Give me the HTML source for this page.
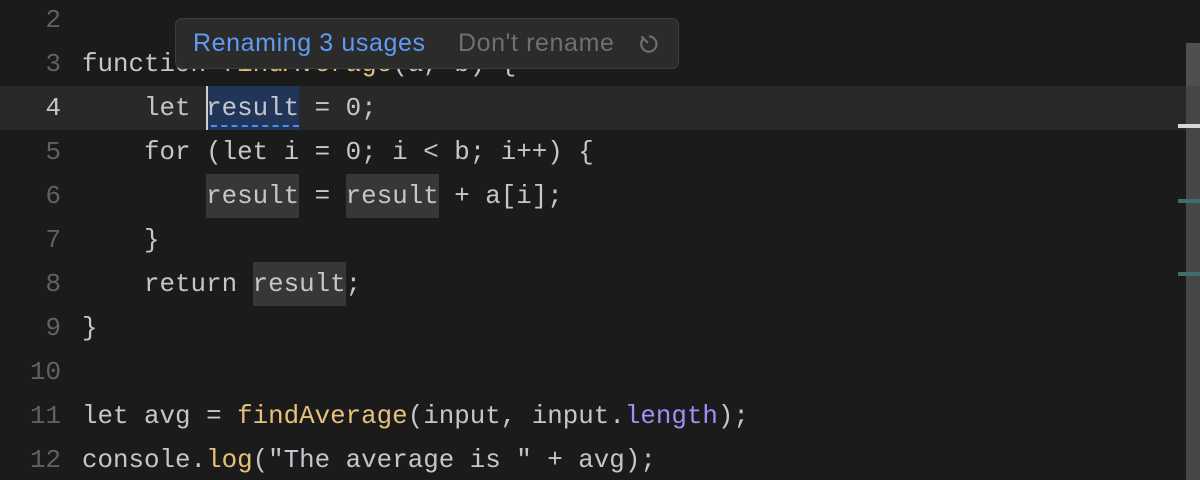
<!DOCTYPE html>
<html><head><style>
html,body{margin:0;padding:0;background:#1b1b1b;width:1200px;height:480px;overflow:hidden;}
.ed{position:relative;width:1200px;height:480px;font-family:"Liberation Mono",monospace;font-size:25.85px;color:#c4c6cc;}
.ln{position:absolute;left:0;height:44px;line-height:44px;width:1186px;white-space:pre;}
.num{position:absolute;left:0;width:61px;text-align:right;color:#5f6166;}
.cur .num{color:#c4c6cc;}
.code{position:absolute;left:82px;}
.cur{background:#292929;}
.y{color:#e6c17c;}
.p{color:#a48df5;}
.h{background:#373737;display:inline-block;height:44px;}
.sel{background:#213559;display:inline-block;height:44px;position:relative;}
.sel:before{content:"";position:absolute;left:0;top:0;width:2px;height:44px;background:#d0d0d0;}
.sel:after{content:"";position:absolute;left:5px;right:0;bottom:3px;border-bottom:2px dashed #4f8ff0;}
.sb{position:absolute;left:1186px;top:43px;width:14px;height:437px;background:#464646;}
.sbt{position:absolute;left:1186px;top:43px;width:14px;height:43px;background:#4f4f4f;}
.mk{position:absolute;left:1178px;width:22px;height:4px;}
.pop{position:absolute;left:175px;top:18px;width:502px;height:49px;background:#2b2b2b;border:1px solid #3d3d3d;border-radius:7px;font-family:"Liberation Sans",sans-serif;font-size:25px;letter-spacing:0.6px;line-height:49px;}
</style></head><body><div class="ed">
<div class="ln" style="top:-2px"><span class="num">2</span></div>
<div class="ln" style="top:42px"><span class="num">3</span><span class="code">function <span class="y">findAverage</span>(a, b) {</span></div>
<div class="ln cur" style="top:86px"><span class="num">4</span><span class="code">    let <span class="sel">result</span> = 0;</span></div>
<div class="ln" style="top:130px"><span class="num">5</span><span class="code">    for (let i = 0; i &lt; b; i++) {</span></div>
<div class="ln" style="top:174px"><span class="num">6</span><span class="code">        <span class="h">result</span> = <span class="h">result</span> + a[i];</span></div>
<div class="ln" style="top:218px"><span class="num">7</span><span class="code">    }</span></div>
<div class="ln" style="top:262px"><span class="num">8</span><span class="code">    return <span class="h">result</span>;</span></div>
<div class="ln" style="top:306px"><span class="num">9</span><span class="code">}</span></div>
<div class="ln" style="top:350px"><span class="num">10</span></div>
<div class="ln" style="top:394px"><span class="num">11</span><span class="code">let avg = <span class="y">findAverage</span>(input, input.<span class="p">length</span>);</span></div>
<div class="ln" style="top:438px"><span class="num">12</span><span class="code">console.<span class="y">log</span>("The average is " + avg);</span></div>
<div class="sb"></div><div class="sbt"></div>
<div class="mk" style="top:124px;background:#d8d8d8"></div>
<div class="mk" style="top:199px;background:#3f6f6c"></div>
<div class="mk" style="top:272px;background:#3f6f6c"></div>
<div class="pop">
<span style="position:absolute;left:17px;color:#5f9bf2">Renaming 3 usages</span>
<span style="position:absolute;left:282px;color:#6e6f72">Don't rename</span>
<svg style="position:absolute;left:461px;top:13px" width="24" height="24" viewBox="0 0 22 22"><path d="M5.5 6.5 A7 7 0 1 0 11 4" fill="none" stroke="#6e6f72" stroke-width="2"/><path d="M4 4 L10 10" stroke="#6e6f72" stroke-width="2" fill="none"/></svg>
</div>
</div></body></html>
